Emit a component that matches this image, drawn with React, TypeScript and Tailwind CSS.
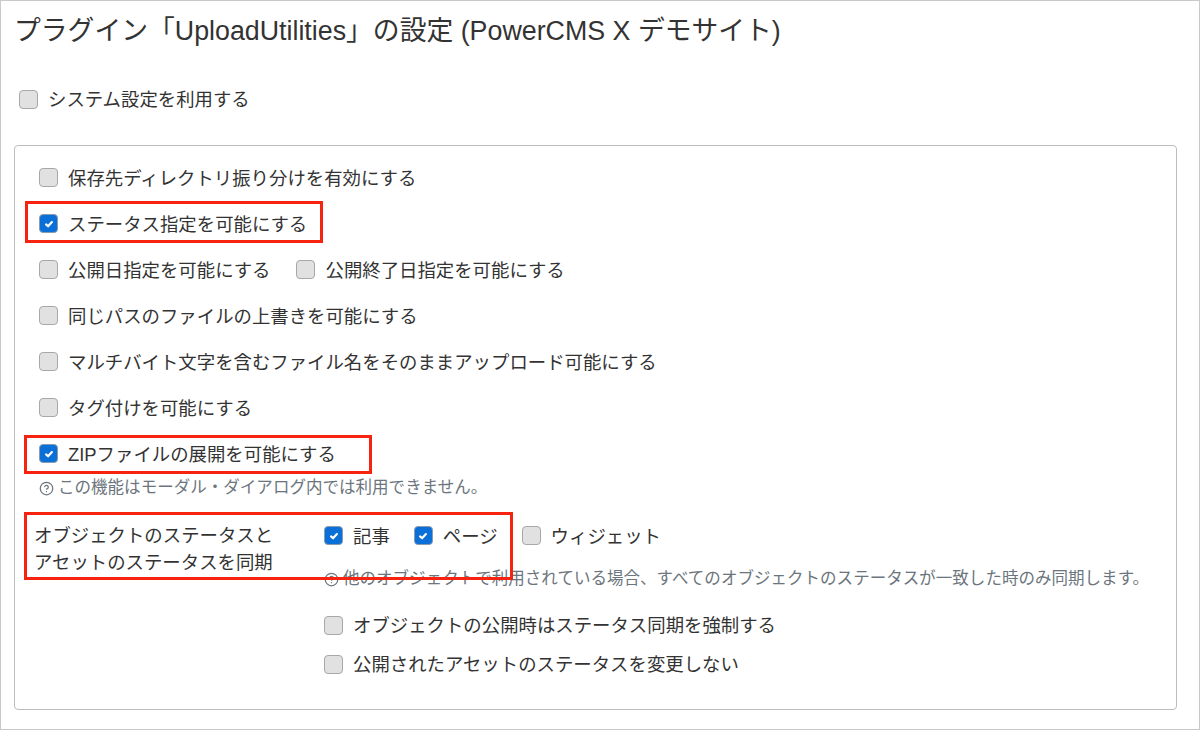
import { CircleHelp } from 'lucide-react';

function Check({ label, checked = false }: { label: string; checked?: boolean }) {
  return (
    <label className="flex items-center gap-[10px] whitespace-nowrap">
      {checked ? (
        <span className="w-[19px] h-[19px] rounded-[4px] bg-[#0a6fd6] border border-[#8a9bb0] flex items-center justify-center">
          <svg className="w-[10px] h-[10px]" viewBox="0 0 12 12" fill="none" stroke="#fff" strokeWidth={2.6} strokeLinecap="round" strokeLinejoin="round">
            <path d="M2.5 6.5l2.4 2.2 4.6-5" />
          </svg>
        </span>
      ) : (
        <span className="w-[19px] h-[19px] rounded-[4px] bg-[#e1e1e1] border border-[#a8a8a8]" />
      )}
      <span className="pt-[2px]">{label}</span>
    </label>
  );
}

function Note({ text }: { text: string }) {
  return (
    <p className="flex items-center gap-[4px] text-[16.55px] text-[#6c757d] whitespace-nowrap">
      <CircleHelp size={15} strokeWidth={2} />
      <span>{text}</span>
    </p>
  );
}

function Frame({ className }: { className: string }) {
  return <div className={`absolute border-[3px] border-[#f5230f] ${className}`} />;
}

export default function App() {
  return (
    <div
      className="relative w-[1200px] h-[730px] overflow-hidden bg-white border border-[#c9c9c9] text-[18.4px] text-[#333] pl-[13px] pr-[22px]"
      style={{ fontFamily: '"Liberation Sans", "Noto Sans CJK JP", sans-serif' }}
    >
      <h1 className="text-[26.8px] leading-[40px] mt-[9px] pt-[1px] h-[40px] text-[#333] whitespace-nowrap">
        プラグイン「UploadUtilities」の設定 (PowerCMS X デモサイト)
      </h1>

      <div className="h-[24px] mt-[37px] ml-[5px] flex items-center">
        <Check label="システム設定を利用する" />
      </div>

      <div className="mt-[34px] h-[565px] border border-[#bdbdbd] rounded-[4px] pt-[9px] pl-[24px]">
        <div className="h-[46px] flex items-center"><Check label="保存先ディレクトリ振り分けを有効にする" /></div>
        <div className="h-[46px] flex items-center"><Check checked label="ステータス指定を可能にする" /></div>
        <div className="h-[46px] flex items-center gap-[26px]">
          <Check label="公開日指定を可能にする" />
          <Check label="公開終了日指定を可能にする" />
        </div>
        <div className="h-[46px] flex items-center"><Check label="同じパスのファイルの上書きを可能にする" /></div>
        <div className="h-[46px] flex items-center"><Check label="マルチバイト文字を含むファイル名をそのままアップロード可能にする" /></div>
        <div className="h-[46px] flex items-center"><Check label="タグ付けを可能にする" /></div>
        <div className="h-[46px] flex items-center"><Check checked label="ZIPファイルの展開を可能にする" /></div>
        <div className="h-[24px] -mt-[1px] flex items-center"><Note text="この機能はモーダル・ダイアログ内では利用できません。" /></div>

        <div className="flex -ml-[5px] mt-[22px]">
          <div className="w-[290px] leading-[27px]">
            オブジェクトのステータスと<br />アセットのステータスを同期
          </div>
          <div>
            <div className="h-[27px] flex items-center gap-[24px]">
              <Check checked label="記事" />
              <Check checked label="ページ" />
              <Check label="ウィジェット" />
            </div>
            <div className="h-[24px] mt-[18px] flex items-center"><Note text="他のオブジェクトで利用されている場合、すべてのオブジェクトのステータスが一致した時のみ同期します。" /></div>
            <div className="h-[24px] mt-[22px] flex items-center"><Check label="オブジェクトの公開時はステータス同期を強制する" /></div>
            <div className="h-[24px] mt-[15px] flex items-center"><Check label="公開されたアセットのステータスを変更しない" /></div>
          </div>
        </div>
      </div>

      <Frame className="left-[24px] top-[200px] w-[298px] h-[42px]" />
      <Frame className="left-[23px] top-[434px] w-[348px] h-[39px]" />
      <Frame className="left-[23px] top-[511px] w-[489px] h-[68px]" />
    </div>
  );
}
